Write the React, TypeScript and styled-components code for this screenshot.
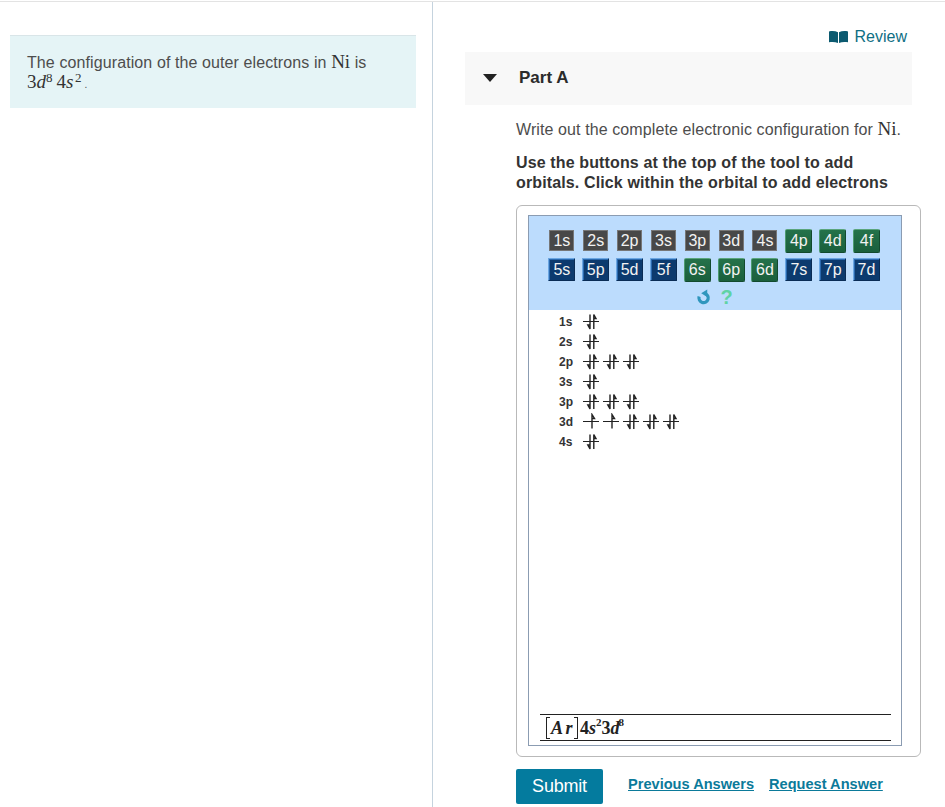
import styled, { createGlobalStyle } from 'styled-components';

type ButtonTone = 'gray' | 'green' | 'blue';

const orbitalButtons: { label: string; tone: ButtonTone }[][] = [
  [
    { label: '1s', tone: 'gray' },
    { label: '2s', tone: 'gray' },
    { label: '2p', tone: 'gray' },
    { label: '3s', tone: 'gray' },
    { label: '3p', tone: 'gray' },
    { label: '3d', tone: 'gray' },
    { label: '4s', tone: 'gray' },
    { label: '4p', tone: 'green' },
    { label: '4d', tone: 'green' },
    { label: '4f', tone: 'green' },
  ],
  [
    { label: '5s', tone: 'blue' },
    { label: '5p', tone: 'blue' },
    { label: '5d', tone: 'blue' },
    { label: '5f', tone: 'blue' },
    { label: '6s', tone: 'green' },
    { label: '6p', tone: 'green' },
    { label: '6d', tone: 'green' },
    { label: '7s', tone: 'blue' },
    { label: '7p', tone: 'blue' },
    { label: '7d', tone: 'blue' },
  ],
];

// 2 = paired, 1 = single electron
const orbitals: { label: string; boxes: number[] }[] = [
  { label: '1s', boxes: [2] },
  { label: '2s', boxes: [2] },
  { label: '2p', boxes: [2, 2, 2] },
  { label: '3s', boxes: [2] },
  { label: '3p', boxes: [2, 2, 2] },
  { label: '3d', boxes: [1, 1, 2, 2, 2] },
  { label: '4s', boxes: [2] },
];

function OrbitalBox({ electrons }: { electrons: number }) {
  return (
    <svg width="16" height="18" viewBox="0 0 16 18">
      <path d="M0 8.5H16" stroke="#222" strokeWidth="1" fill="none" />
      {electrons === 1 ? (
        <path d="M9 15.5V1.5L11.5 5.5H9.5" stroke="#222" strokeWidth="1.4" fill="none" />
      ) : (
        <>
          <path d="M10.8 16V1.5L13 5.5H11" stroke="#222" strokeWidth="1.4" fill="none" />
          <path d="M7 1.5V16L4.8 12H6.8" stroke="#222" strokeWidth="1.4" fill="none" />
        </>
      )}
    </svg>
  );
}

function App() {
  return (
    <Page>
      <GlobalStyle />
      <LeftColumn>
        <Banner>
          The configuration of the outer electrons in <MathRoman>Ni</MathRoman> is
          <br />
          <MathLine>
            3<MathIdent>d</MathIdent>
            <MathSup $gap={4}>8</MathSup>4<MathIdent $gap={1.5}>s</MathIdent>
            <MathSup $gap={3}>2</MathSup>
          </MathLine>
          <Dot>.</Dot>
        </Banner>
      </LeftColumn>

      <RightColumn>
        <ReviewRow>
          <svg width="19" height="12" viewBox="0 0 19 12">
            <path d="M0 0.5C3 -0.2 6.5 0 9 1.2V12C6.5 10.8 3 10.6 0 11.3Z" fill="#0b5a70" />
            <path d="M19 0.5C16 -0.2 12.5 0 10 1.2V12C12.5 10.8 16 10.6 19 11.3Z" fill="#0b5a70" />
          </svg>
          <ReviewLink>Review</ReviewLink>
        </ReviewRow>

        <PartHeader>
          <Caret />
          <PartTitle>Part A</PartTitle>
        </PartHeader>

        <PartBody>
          <Prompt>
            Write out the complete electronic configuration for <MathRoman>Ni</MathRoman>.
          </Prompt>
          <Instructions>
            Use the buttons at the top of the tool to add
            <br />
            orbitals. Click within the orbital to add electrons
          </Instructions>

          <ToolFrame>
            <ToolCanvas>
              <ToolBar>
                {orbitalButtons.map((row, i) => (
                  <ButtonRow key={i}>
                    {row.map((b) => (
                      <ButtonCell key={b.label}>
                        <OrbitalButton $tone={b.tone}>{b.label}</OrbitalButton>
                      </ButtonCell>
                    ))}
                  </ButtonRow>
                ))}
                <ToolIcons>
                  <svg width="15" height="16" viewBox="0 0 16 17">
                    <path
                      d="M9.5 4.7A5 5 0 1 1 3.3 8"
                      stroke="#2f96bd"
                      strokeWidth="3.4"
                      fill="none"
                    />
                    <path d="M12 0.5V8.5L5.5 4.5Z" fill="#2f96bd" />
                  </svg>
                  <HelpMark>?</HelpMark>
                </ToolIcons>
              </ToolBar>

              <OrbitalList>
                {orbitals.map((o) => (
                  <OrbitalRow key={o.label}>
                    <OrbitalLabel>{o.label}</OrbitalLabel>
                    <OrbitalBoxes>
                      {o.boxes.map((n, i) => (
                        <OrbitalBox key={i} electrons={n} />
                      ))}
                    </OrbitalBoxes>
                  </OrbitalRow>
                ))}
              </OrbitalList>

              <FormulaBar>
                <Formula>
                  <Bracket $side="left" />
                  <FormulaAr>Ar</FormulaAr>
                  <Bracket $side="right" />
                  <span>4</span>
                  <i>s</i>
                  <FormulaSup $overlap={0}>2</FormulaSup>
                  <span>3</span>
                  <i>d</i>
                  <FormulaSup $overlap={1}>8</FormulaSup>
                </Formula>
              </FormulaBar>
            </ToolCanvas>
          </ToolFrame>

          <ActionRow>
            <SubmitButton>Submit</SubmitButton>
            <ActionLinks>
              <ActionLink>Previous Answers</ActionLink>
              <ActionLink>Request Answer</ActionLink>
            </ActionLinks>
          </ActionRow>
        </PartBody>
      </RightColumn>
    </Page>
  );
}

const GlobalStyle = createGlobalStyle`
  html, body {
    margin: 0;
    padding: 0;
    background: #fff;
    overflow: hidden;
  }
  body {
    font-family: "Liberation Sans", Arial, sans-serif;
    font-size: 16px;
    color: #4d4d4d;
  }
`;

const Page = styled.div`
  display: flex;
  width: 945px;
  height: 806px;
  box-sizing: border-box;
  border-top: 1px solid #e3e3e3;
  margin-top: 1px;
`;

const LeftColumn = styled.div`
  width: 433px;
  flex: none;
  box-sizing: border-box;
  border-right: 1px solid #c5d3de;
  padding: 33px 16px 0 10px;
`;

const Banner = styled.div`
  height: 73px;
  box-sizing: border-box;
  background: #e5f4f6;
  border-top: 1px solid #d9e5e8;
  padding: 16px 17px 0;
  line-height: 19px;
  letter-spacing: 0.1px;
`;

const MathRoman = styled.span`
  font-family: "Liberation Serif", "Times New Roman", serif;
  font-size: 19px;
  letter-spacing: 0;
  color: #333;
`;

const MathLine = styled.span`
  font-family: "Liberation Serif", "Times New Roman", serif;
  font-size: 19px;
  letter-spacing: 0;
  color: #333;
`;

const MathIdent = styled.i<{ $gap?: number }>`
  margin-right: ${(p) => p.$gap ?? 0}px;
`;

const MathSup = styled.span<{ $gap: number }>`
  font-size: 13px;
  line-height: 0;
  vertical-align: 6px;
  margin-right: ${(p) => p.$gap}px;
`;

const Dot = styled.span`
  font-size: 10px;
`;

const RightColumn = styled.div`
  flex: 1;
  min-width: 0;
  padding-left: 32px;
  padding-right: 33px;
`;

const ReviewRow = styled.div`
  display: flex;
  justify-content: flex-end;
  align-items: center;
  gap: 7px;
  height: 50px;
  padding-top: 20px;
  padding-right: 5px;
  box-sizing: border-box;
`;

const ReviewLink = styled.span`
  color: #0f6f84;
  font-size: 16px;
`;

const PartHeader = styled.div`
  display: flex;
  align-items: center;
  height: 53px;
  box-sizing: border-box;
  background: #f8f8f8;
  padding: 0 0 2px 18px;
`;

const Caret = styled.span`
  width: 0;
  height: 0;
  border-left: 7px solid transparent;
  border-right: 7px solid transparent;
  border-top: 8px solid #222;
  margin-right: 22px;
`;

const PartTitle = styled.span`
  font-weight: bold;
  font-size: 17px;
  color: #2b2b2b;
`;

const PartBody = styled.div`
  padding-left: 51px;
  margin-right: -8px;
`;

const Prompt = styled.div`
  margin-top: 13px;
  line-height: 22px;
  letter-spacing: 0.1px;
`;

const Instructions = styled.div`
  margin-top: 12px;
  font-weight: bold;
  color: #333;
  line-height: 20px;
  letter-spacing: 0.13px;
`;

const ToolFrame = styled.div`
  margin-top: 12px;
  width: 405px;
  height: 552px;
  box-sizing: border-box;
  border: 1px solid #b9b9b9;
  border-radius: 6px;
  padding: 9px 18px 10px 11px;
`;

const ToolCanvas = styled.div`
  display: flex;
  flex-direction: column;
  height: 100%;
  box-sizing: border-box;
  border: 1px solid #8b9cb2;
`;

const ToolBar = styled.div`
  height: 94px;
  flex: none;
  box-sizing: border-box;
  background: #bcdcfd;
  padding-top: 10px;
`;

const ButtonRow = styled.div`
  display: flex;
  padding-left: 16px;
  height: 29px;
  align-items: center;
`;

const ButtonCell = styled.div`
  width: 33.85px;
  flex: none;
  display: flex;
  justify-content: center;
`;

const toneStyles: Record<ButtonTone, string> = {
  gray: `
    width: 25px;
    height: 21px;
    background: #484848;
    border: 1px solid #777;
  `,
  green: `
    width: 27px;
    height: 24px;
    background: linear-gradient(#25724a, #1a5f3c);
    border: 1px solid #124a2e;
    border-top-color: #5aa57c;
    border-left-color: #4d9a70;
    border-radius: 2px;
  `,
  blue: `
    width: 27px;
    height: 23px;
    background: #0c3a6e;
    border: 1px solid #0a2c55;
    border-top-color: #6ba6e2;
    border-left-color: #6ba6e2;
    border-radius: 1px;
    box-shadow: inset 1px 1px 0 #2a68ad;
  `,
};

const OrbitalButton = styled.div<{ $tone: ButtonTone }>`
  display: flex;
  align-items: center;
  justify-content: center;
  box-sizing: border-box;
  color: #f2f2f2;
  font-size: 16px;
  ${(p) => toneStyles[p.$tone]}
`;

const ToolIcons = styled.div`
  display: flex;
  justify-content: center;
  align-items: center;
  gap: 9px;
  height: 22px;
  margin-top: 2px;
  padding-right: 1px;
`;

const HelpMark = styled.span`
  color: #5fd3a4;
  font-weight: bold;
  font-size: 20px;
  line-height: 16px;
`;

const OrbitalList = styled.div`
  flex: 1;
  padding-top: 2px;
  padding-left: 30px;
`;

const OrbitalRow = styled.div`
  display: flex;
  align-items: center;
  height: 20px;
`;

const OrbitalLabel = styled.span`
  width: 24px;
  flex: none;
  font-size: 12px;
  font-weight: bold;
  color: #333;
`;

const OrbitalBoxes = styled.div`
  display: flex;
  gap: 4px;
`;

const FormulaBar = styled.div`
  flex: none;
  height: 27px;
  box-sizing: border-box;
  margin: 0 10px 4px 11px;
  border-top: 1px solid #222;
  border-bottom: 1px solid #222;
  padding-left: 6px;
  display: flex;
  align-items: center;
`;

const Formula = styled.div`
  display: flex;
  align-items: center;
  font-family: "Liberation Serif", "Times New Roman", serif;
  font-weight: bold;
  font-size: 18px;
  line-height: 20px;
  color: #222;
  white-space: nowrap;
`;

const Bracket = styled.span<{ $side: 'left' | 'right' }>`
  width: 4px;
  height: 22px;
  box-sizing: border-box;
  border: 1px solid #222;
  border-${(p) => (p.$side === 'left' ? 'right' : 'left')}: none;
  margin-right: ${(p) => (p.$side === 'right' ? 2 : 0)}px;
`;

const FormulaAr = styled.i`
  letter-spacing: 2.5px;
  margin-left: 1px;
  margin-right: -1px;
`;

const FormulaSup = styled.span<{ $overlap: number }>`
  font-size: 11px;
  line-height: 11px;
  align-self: flex-start;
  margin-left: ${(p) => -p.$overlap}px;
`;

const ActionRow = styled.div`
  display: flex;
  align-items: center;
  margin-top: 12px;
`;

const SubmitButton = styled.div`
  display: flex;
  align-items: center;
  justify-content: center;
  width: 87px;
  height: 35px;
  background: #047b9e;
  border-radius: 2px;
  color: #fff;
  font-size: 18px;
  letter-spacing: -0.2px;
`;

const ActionLinks = styled.div`
  display: flex;
  gap: 15px;
  margin-left: 25px;
  margin-bottom: 5px;
`;

const ActionLink = styled.span`
  color: #0b7a9a;
  font-weight: bold;
  font-size: 14.6px;
  text-decoration: underline;
`;

export default App;
